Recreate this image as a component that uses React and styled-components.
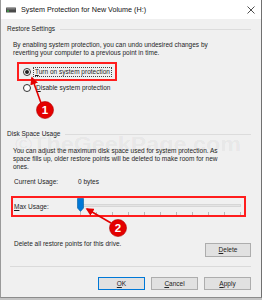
import React from "react";
import styled, { createGlobalStyle } from "styled-components";

const GlobalStyle = createGlobalStyle`
  html, body {
    margin: 0;
    padding: 0;
    background: #c4c4c4;
  }
  body {
    font-family: "Liberation Sans", Arial, sans-serif;
  }
`;

const Window = styled.div`
  position: relative;
  box-sizing: border-box;
  width: 262px;
  height: 298px;
  background: #f0f0f0;
  border-left: 1px solid #9a9a9a;
  border-right: 1px solid #707070;
  border-bottom: 1px solid #8c8c8c;
  display: flex;
  flex-direction: column;
  overflow: hidden;
  color: #1e1e1e;
  font-size: 6.5px;
`;

const TitleBar = styled.div`
  flex: none;
  height: 19px;
  background: #fff;
  display: flex;
  align-items: center;
  padding: 0 6px 0 5px;
`;

const Title = styled.span`
  flex: 1;
  margin-left: 5px;
  font-size: 7.2px;
  color: #111;
`;

const Body = styled.div`
  display: flex;
  flex-direction: column;
  padding: 6px 10px 0 6px;
`;

const Legend = styled.div`
  display: flex;
  align-items: center;
  gap: 5px;
  height: 8px;
  line-height: 8px;
  margin-top: ${(p) => p.$top || 0}px;

  &::after {
    content: "";
    flex: 1;
    height: 1px;
    background: #dcdcdc;
  }
`;

const Para = styled.div`
  padding-left: 6px;
  line-height: 8px;
  margin-top: ${(p) => p.$top}px;
`;

const Highlight = styled.div`
  box-sizing: border-box;
  display: flex;
  align-items: center;
  border: 2px solid #ff1d1d;
  margin: ${(p) => p.$margin};
  width: ${(p) => p.$width}px;
  height: ${(p) => p.$height}px;
  padding-left: ${(p) => p.$pad}px;
`;

const RadioRow = styled.div`
  display: flex;
  align-items: center;
  height: 8px;
  margin: 3px 0 0 16px;
`;

const Radio = styled.span`
  position: relative;
  box-sizing: border-box;
  width: 8px;
  height: 8px;
  border: 1px solid #333;
  border-radius: 50%;
  background: #fff;
  flex: none;

  &::after {
    content: "";
    display: ${(p) => (p.$checked ? "block" : "none")};
    position: absolute;
    left: 1px;
    top: 1px;
    width: 4px;
    height: 4px;
    border-radius: 50%;
    background: #222;
  }
`;

const RadioLabel = styled.span`
  margin-left: ${(p) => (p.$focus ? 3 : 4)}px;
  line-height: 8px;
  padding: 0 1px;
  outline: ${(p) => (p.$focus ? "1px dotted #444" : "none")};
`;

const Key = styled.span`
  text-decoration: underline;
`;

const InfoRow = styled.div`
  display: grid;
  grid-template-columns: 64px auto;
  line-height: 8px;
  padding-left: 7px;
  margin-top: 7px;
`;

const SliderLabel = styled.span`
  width: 63px;
  flex: none;
  line-height: 8px;
`;

const Slider = styled.div`
  position: relative;
  flex: 1;
  align-self: stretch;
  display: flex;
  flex-direction: column;
  padding: 6px 1px 0 3px;
  margin-right: 2px;
`;

const Track = styled.div`
  height: 2px;
  background: #e4e4e4;
  border: 1px solid #d6d6d6;
  border-left: none;
`;

const Ticks = styled.div`
  display: flex;
  justify-content: space-between;
  margin-top: 5px;

  span {
    width: 1px;
    height: 3px;
    background: #b8b8b8;
  }
`;

const Thumb = styled.svg`
  position: absolute;
  left: 0;
  top: 0;
`;

const DeleteRow = styled.div`
  display: flex;
  justify-content: space-between;
  align-items: flex-start;
  margin-top: 23px;
  padding-left: 7px;
  line-height: 8px;
`;

const Button = styled.div`
  box-sizing: border-box;
  width: ${(p) => p.$width || 47}px;
  height: ${(p) => p.$height || 13}px;
  display: flex;
  align-items: center;
  justify-content: center;
  background: #e1e1e1;
  border: 1px solid ${(p) => (p.$default ? "#0078d7" : "#adadad")};
  margin-top: ${(p) => p.$top || 0}px;
  color: #222;
`;

const Separator = styled.div`
  height: 1px;
  background: #dadada;
  margin: 9px 0 0 3px;
`;

const ButtonRow = styled.div`
  display: flex;
  justify-content: flex-end;
  gap: 6px;
  margin-top: 10px;
`;

const Overlay = styled.svg`
  position: absolute;
  left: -1px;
  top: 0;
  pointer-events: none;
`;

const DriveIcon = () => (
  <svg width="10" height="6" viewBox="0 0 10 6">
    <rect x="0" y="0.5" width="10" height="5" rx="0.5" fill="#4a4a4a" />
    <rect x="0.5" y="1" width="9" height="1.5" fill="#7a7a7a" />
    <rect x="1" y="3.5" width="2" height="1" fill="#3fd34a" />
  </svg>
);

const CloseIcon = () => (
  <svg width="8" height="8" viewBox="0 0 8 8">
    <path d="M0.5 0.5 L7.5 7.5 M7.5 0.5 L0.5 7.5" stroke="#222" strokeWidth="0.8" />
  </svg>
);

const Badge = ({ x, y, n }) => (
  <g>
    <circle cx={x} cy={y} r="8.5" fill="#e40000" stroke="#b00000" strokeWidth="0.6" />
    <text
      x={x}
      y={y + 4}
      textAnchor="middle"
      fontFamily="Liberation Sans, Arial, sans-serif"
      fontWeight="bold"
      fontSize="11.5"
      fill="#fff"
    >
      {n}
    </text>
  </g>
);

const ticks = Array.from({ length: 11 });

export default function App() {
  return (
    <>
      <GlobalStyle />
      <Window>
        <TitleBar>
          <DriveIcon />
          <Title>System Protection for New Volume (H:)</Title>
          <CloseIcon />
        </TitleBar>

        <Body>
          <Legend $top={0}>Restore Settings</Legend>
          <Para $top={8}>
            By enabling system protection, you can undo undesired changes by
            <br />
            reverting your computer to a previous point in time.
          </Para>

          <Highlight $margin="5px 0 0 10px" $width={100} $height={19} $pad={4}>
            <Radio $checked />
            <RadioLabel $focus>
              <Key>T</Key>urn on system protection
            </RadioLabel>
          </Highlight>
          <RadioRow>
            <Radio />
            <RadioLabel>
              <Key>D</Key>isable system protection
            </RadioLabel>
          </RadioRow>

          <Legend $top={38}>Disk Space Usage</Legend>
          <Para $top={9}>
            You can adjust the maximum disk space used for system protection. As
            <br />
            space fills up, older restore points will be deleted to make room for new
            <br />
            ones.
          </Para>

          <InfoRow>
            <span>Current Usage:</span>
            <span>0 bytes</span>
          </InfoRow>

          <Highlight $margin="10px 0 0 4px" $width={235} $height={21} $pad={1}>
            <SliderLabel>
              <Key>M</Key>ax Usage:
            </SliderLabel>
            <Slider>
              <Track />
              <Ticks>
                {ticks.map((_, i) => (
                  <span key={i} />
                ))}
              </Ticks>
              <Thumb width="7" height="14" viewBox="0 0 7 14">
                <path d="M0.5 0.5 H6.5 V10 L3.5 13.5 L0.5 10 Z" fill="#0078d7" stroke="#005a9e" strokeWidth="0.6" />
              </Thumb>
            </Slider>
          </Highlight>

          <DeleteRow>
            <span>Delete all restore points for this drive.</span>
            <Button $width={46} $height={14} $top={3}>
              <span>
                <Key>D</Key>elete
              </span>
            </Button>
          </DeleteRow>

          <Separator />

          <ButtonRow>
            <Button $default>
              <span>
                <Key>O</Key>K
              </span>
            </Button>
            <Button>
              <span>
                <Key>C</Key>ancel
              </span>
            </Button>
            <Button>
              <span>
                <Key>A</Key>pply
              </span>
            </Button>
          </ButtonRow>
        </Body>

        <Overlay width="262" height="298" viewBox="0 0 262 298">
          <defs>
            <marker id="head" viewBox="0 0 10 10" refX="8" refY="5" markerWidth="5" markerHeight="5" orient="auto">
              <path d="M0 0 L10 5 L0 10 Z" fill="#e40000" />
            </marker>
          </defs>
          <text
            x="15"
            y="151"
            textLength="226"
            lengthAdjust="spacingAndGlyphs"
            fontFamily="Liberation Sans, Arial, sans-serif"
            fontWeight="bold"
            fontSize="21"
            fill="rgba(0,0,0,0.055)"
          >
            ©TheGeekPage.com
          </text>
          <line x1="41" y1="103" x2="32" y2="78" stroke="#e40000" strokeWidth="1.6" markerEnd="url(#head)" />
          <Badge x={45} y={110} n="1" />
          <line x1="111" y1="223" x2="87" y2="209" stroke="#e40000" strokeWidth="1.6" markerEnd="url(#head)" />
          <Badge x={118} y={228} n="2" />
        </Overlay>
      </Window>
    </>
  );
}
